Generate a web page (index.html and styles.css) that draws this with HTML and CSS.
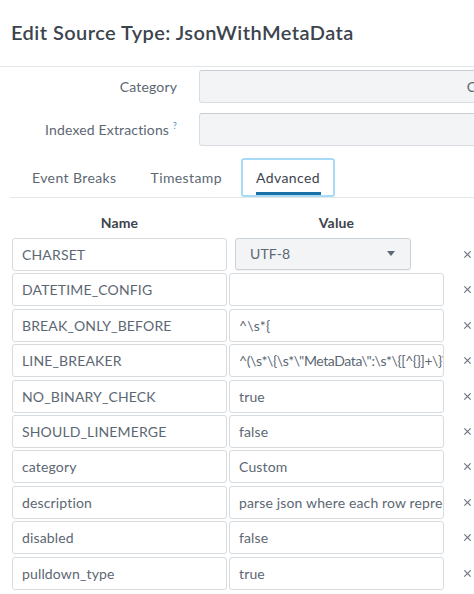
FILE: index.html
```html
<!DOCTYPE html>
<html lang="en">
<head>
<meta charset="utf-8">
<title>Edit Source Type</title>
<link rel="stylesheet" href="styles.css">
</head>
<body>
<div class="page">
  <header class="page-header">
    <h1 class="title">Edit Source Type: JsonWithMetaData</h1>
  </header>

  <div class="form">
    <div class="field">
      <label class="field-label">Category</label>
      <div class="field-control"><span class="control-text">Custom</span></div>
    </div>
    <div class="field">
      <label class="field-label">Indexed Extractions <sup class="help">?</sup></label>
      <div class="field-control"><span class="control-text placeholder">none</span></div>
    </div>
  </div>

  <nav class="tabs">
    <div class="tab">Event Breaks</div>
    <div class="tab">Timestamp</div>
    <div class="tab active">Advanced</div>
  </nav>

  <div class="props">
    <div class="col-head">Name</div>
    <div class="col-head">Value</div>
    <div></div>

    <div class="cell">CHARSET</div>
    <div class="value-slot">
      <div class="select"><span>UTF-8</span><span class="caret"></span></div>
    </div>
    <div class="remove"><svg viewBox="0 0 10 10" class="x-icon"><path d="M1.5 1.5 L8.5 8.5 M8.5 1.5 L1.5 8.5"/></svg></div>

    <div class="cell">DATETIME_CONFIG</div>
    <div class="cell"></div>
    <div class="remove"><svg viewBox="0 0 10 10" class="x-icon"><path d="M1.5 1.5 L8.5 8.5 M8.5 1.5 L1.5 8.5"/></svg></div>

    <div class="cell">BREAK_ONLY_BEFORE</div>
    <div class="cell">^\s*{</div>
    <div class="remove"><svg viewBox="0 0 10 10" class="x-icon"><path d="M1.5 1.5 L8.5 8.5 M8.5 1.5 L1.5 8.5"/></svg></div>

    <div class="cell">LINE_BREAKER</div>
    <div class="cell regex">^(\s*\{\s*\"MetaData\":\s*\{[^{}]+\}\s*,)</div>
    <div class="remove"><svg viewBox="0 0 10 10" class="x-icon"><path d="M1.5 1.5 L8.5 8.5 M8.5 1.5 L1.5 8.5"/></svg></div>

    <div class="cell">NO_BINARY_CHECK</div>
    <div class="cell">true</div>
    <div class="remove"><svg viewBox="0 0 10 10" class="x-icon"><path d="M1.5 1.5 L8.5 8.5 M8.5 1.5 L1.5 8.5"/></svg></div>

    <div class="cell">SHOULD_LINEMERGE</div>
    <div class="cell">false</div>
    <div class="remove"><svg viewBox="0 0 10 10" class="x-icon"><path d="M1.5 1.5 L8.5 8.5 M8.5 1.5 L1.5 8.5"/></svg></div>

    <div class="cell">category</div>
    <div class="cell">Custom</div>
    <div class="remove"><svg viewBox="0 0 10 10" class="x-icon"><path d="M1.5 1.5 L8.5 8.5 M8.5 1.5 L1.5 8.5"/></svg></div>

    <div class="cell">description</div>
    <div class="cell">parse json where each row represents a record</div>
    <div class="remove"><svg viewBox="0 0 10 10" class="x-icon"><path d="M1.5 1.5 L8.5 8.5 M8.5 1.5 L1.5 8.5"/></svg></div>

    <div class="cell">disabled</div>
    <div class="cell">false</div>
    <div class="remove"><svg viewBox="0 0 10 10" class="x-icon"><path d="M1.5 1.5 L8.5 8.5 M8.5 1.5 L1.5 8.5"/></svg></div>

    <div class="cell">pulldown_type</div>
    <div class="cell">true</div>
    <div class="remove"><svg viewBox="0 0 10 10" class="x-icon"><path d="M1.5 1.5 L8.5 8.5 M8.5 1.5 L1.5 8.5"/></svg></div>
  </div>
</div>
</body>
</html>
```

FILE: styles.css
```css
html, body {
  margin: 0;
  padding: 0;
  background: #ffffff;
}

body {
  font-family: Lato, "Open Sans", "Liberation Sans", sans-serif;
  color: #5c6773;
  font-size: 14px;
  letter-spacing: 0.15px;
  overflow: hidden;
  width: 474px;
  height: 594px;
}

.page {
  width: 474px;
}

.page-header {
  padding: 20px 11px 22px;
  border-bottom: 1px solid #e4e7ea;
}

.title {
  margin: 0;
  font-size: 20px;
  line-height: 24px;
  font-weight: 600;
  letter-spacing: 0.45px;
  color: #3c444d;
  white-space: nowrap;
}

.form {
  margin-top: 3px;
  display: flex;
  flex-direction: column;
  gap: 10px;
}

.field {
  display: flex;
  align-items: center;
  gap: 22px;
}

.field-label {
  flex: 0 0 177px;
  text-align: right;
  font-size: 14px;
  color: #5c6773;
  white-space: nowrap;
}

.help {
  font-size: 9px;
  color: #3e8fc7;
  vertical-align: 6px;
  line-height: 0;
}

.field-control {
  flex: 0 0 584px;
  height: 33px;
  box-sizing: border-box;
  background: #f3f4f6;
  border: 1px solid #d9dde2;
  border-top-color: #c8cdd3;
  border-radius: 3px;
  display: flex;
  align-items: center;
  justify-content: center;
}

.control-text {
  color: #5c6773;
}

.control-text.placeholder {
  color: #c3c8ce;
  padding-left: 10px;
}

.tabs {
  margin: 12px 0 0 10px;
  padding-left: 7px;
  display: flex;
  gap: 4px;
  border-bottom: 1px solid #e4e7ea;
}

.tab {
  position: relative;
  height: 39px;
  box-sizing: border-box;
  padding: 0 13px;
  border: 2px solid transparent;
  border-radius: 3px;
  display: flex;
  align-items: center;
  font-size: 14px;
  letter-spacing: 0.4px;
  color: #5c6773;
}

.tab.active {
  border-color: #a9daf5;
  color: #3c444d;
}

.tab.active::after {
  content: "";
  position: absolute;
  left: 13px;
  right: 12px;
  bottom: 0;
  height: 3px;
  background: #1a72a8;
}

.props {
  margin-top: 16px;
  padding-left: 12px;
  display: grid;
  grid-template-columns: 215px 215px 42px;
  column-gap: 2px;
  row-gap: 2.4px;
}

.col-head {
  text-align: center;
  font-weight: 700;
  font-size: 14px;
  line-height: 18px;
  color: #3c444d;
  margin-bottom: 3.6px;
}

.cell {
  height: 33px;
  box-sizing: border-box;
  border: 1px solid #d6dbe0;
  border-radius: 3px;
  padding: 0 9px;
  display: flex;
  align-items: center;
  white-space: nowrap;
  overflow: hidden;
  color: #5c6773;
  background: #ffffff;
}

.cell.regex {
  letter-spacing: -0.4px;
}

.value-slot {
  display: flex;
  align-items: flex-start;
  padding-left: 6px;
}

.select {
  width: 176px;
  height: 32px;
  box-sizing: border-box;
  background: #f3f4f6;
  border: 1px solid #cdd2d8;
  border-radius: 3px;
  box-shadow: 0 1px 1px rgba(0, 0, 0, 0.06);
  padding: 0 15px 0 14px;
  display: flex;
  align-items: center;
  justify-content: space-between;
  color: #5c6773;
}

.caret {
  width: 0;
  height: 0;
  border-left: 4px solid transparent;
  border-right: 4px solid transparent;
  border-top: 5px solid #5c6773;
}

.remove {
  display: flex;
  align-items: center;
  justify-content: center;
  height: 33px;
}

.x-icon {
  width: 9px;
  height: 9px;
  stroke: #6b7580;
  stroke-width: 1.3;
  fill: none;
}
```
